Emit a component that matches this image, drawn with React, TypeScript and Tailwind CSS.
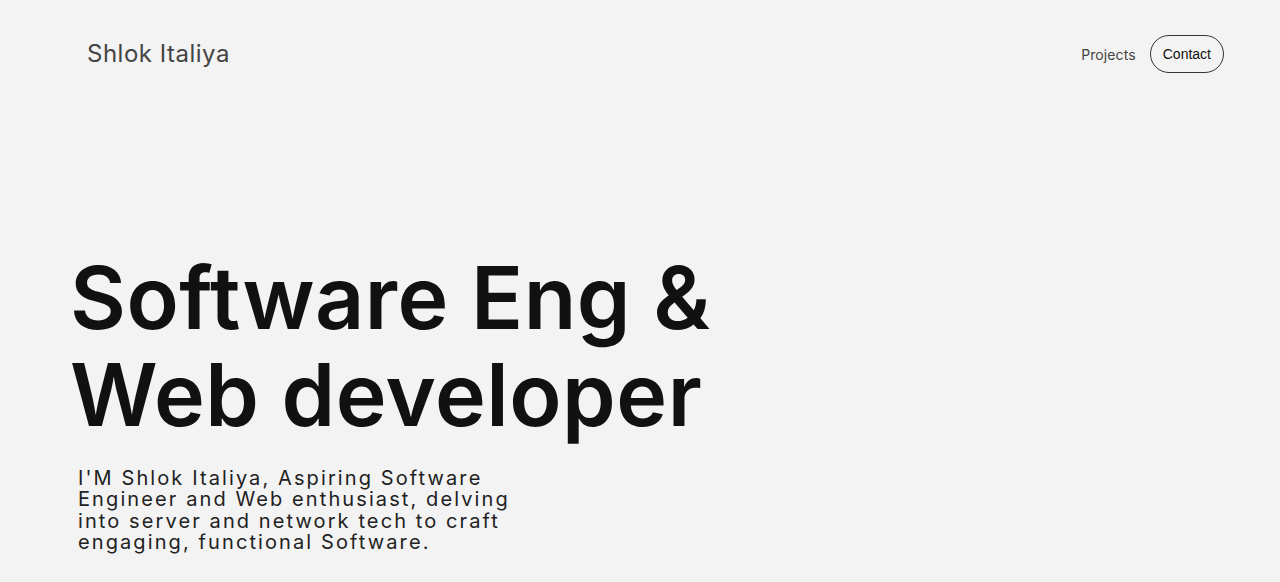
import React from "react";

export default function App() {
  const sans = { fontFamily: "Inter, 'Noto Sans', sans-serif" };
  return (
    <div className="min-h-[582px] w-full bg-[#f3f3f3] text-[#111]" style={sans}>
      <header className="flex items-center justify-between pl-[87px] pr-[56px] pt-[35px]">
        <div className="text-[24px] font-normal tracking-[0.5px] text-[#444]">Shlok Italiya</div>
        <nav className="flex items-center gap-[14px]">
          <a className="text-[14px] tracking-[0.1px] text-[#444]">Projects</a>
          <button
            className="h-[38px] rounded-full border border-[#333] px-[12px] text-[14px] text-[#111]"
            style={{ fontFamily: "'Liberation Sans', Arial, sans-serif" }}
          >
            Contact
          </button>
        </nav>
      </header>
      <main className="pl-[70px] pt-[177px]">
        <h1 className="text-[86px] font-semibold leading-[97px] tracking-[0.5px]">
          Software Eng &amp;
          <br />
          Web developer
        </h1>
        <p className="mt-[24px] ml-[8px] w-[450px] text-[20px] leading-[21.4px] tracking-[2.1px] text-[#222]">
          I'M Shlok Italiya, Aspiring Software Engineer and Web enthusiast, delving into server and network tech to craft engaging, functional Software.
        </p>
      </main>
    </div>
  );
}
